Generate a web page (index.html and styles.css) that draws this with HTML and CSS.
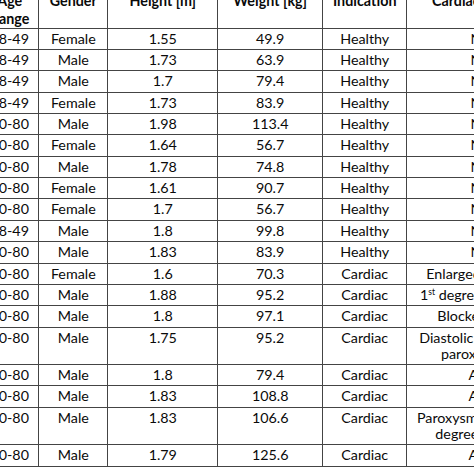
FILE: index.html
```html
<!DOCTYPE html>
<html>
<head>
<meta charset="utf-8">
<link rel="stylesheet" href="styles.css">
</head>
<body>
<div class="viewport">
<table class="data">
  <colgroup>
    <col class="c-age"><col class="c-gender"><col class="c-height"><col class="c-weight"><col class="c-ind"><col class="c-cond">
  </colgroup>
  <thead>
    <tr class="tall">
      <th>Age<br>Range</th><th>Gender</th><th>Height [m]</th><th>Weight [kg]</th><th>Indication</th><th>Cardiac condition</th>
    </tr>
  </thead>
  <tbody>
    <tr><td>18-49</td><td>Female</td><td>1.55</td><td>49.9</td><td>Healthy</td><td>None</td></tr>
    <tr><td>18-49</td><td>Male</td><td>1.73</td><td>63.9</td><td>Healthy</td><td>None</td></tr>
    <tr><td>18-49</td><td>Male</td><td>1.7</td><td>79.4</td><td>Healthy</td><td>None</td></tr>
    <tr><td>18-49</td><td>Female</td><td>1.73</td><td>83.9</td><td>Healthy</td><td>None</td></tr>
    <tr><td>50-80</td><td>Male</td><td>1.98</td><td>113.4</td><td>Healthy</td><td>None</td></tr>
    <tr><td>50-80</td><td>Female</td><td>1.64</td><td>56.7</td><td>Healthy</td><td>None</td></tr>
    <tr><td>50-80</td><td>Male</td><td>1.78</td><td>74.8</td><td>Healthy</td><td>None</td></tr>
    <tr><td>50-80</td><td>Female</td><td>1.61</td><td>90.7</td><td>Healthy</td><td>None</td></tr>
    <tr><td>50-80</td><td>Female</td><td>1.7</td><td>56.7</td><td>Healthy</td><td>None</td></tr>
    <tr><td>18-49</td><td>Male</td><td>1.8</td><td>99.8</td><td>Healthy</td><td>None</td></tr>
    <tr><td>50-80</td><td>Male</td><td>1.83</td><td>83.9</td><td>Healthy</td><td>None</td></tr>
    <tr><td>50-80</td><td>Female</td><td>1.6</td><td>70.3</td><td>Cardiac</td><td>Enlarged left atrium</td></tr>
    <tr><td>50-80</td><td>Male</td><td>1.88</td><td>95.2</td><td>Cardiac</td><td>1<sup>st</sup> degree heart block</td></tr>
    <tr><td>50-80</td><td>Male</td><td>1.8</td><td>97.1</td><td>Cardiac</td><td>Blocked arteries</td></tr>
    <tr class="tall"><td>50-80</td><td>Male</td><td>1.75</td><td>95.2</td><td>Cardiac</td><td>Diastolic heart failure,<br>paroxysmal AF.</td></tr>
    <tr><td>50-80</td><td>Male</td><td>1.8</td><td>79.4</td><td>Cardiac</td><td>Aortic</td></tr>
    <tr><td>50-80</td><td>Male</td><td>1.83</td><td>108.8</td><td>Cardiac</td><td>Aortic</td></tr>
    <tr class="tall"><td>50-80</td><td>Male</td><td>1.83</td><td>106.6</td><td>Cardiac</td><td>Paroxysmal AF and 1st<br>degree AV block,</td></tr>
    <tr><td>50-80</td><td>Male</td><td>1.79</td><td>125.6</td><td>Cardiac</td><td>Aortic</td></tr>
  </tbody>
</table>
</div>
</body>
</html>
```
FILE: styles.css
```css
html, body {
  margin: 0;
  padding: 0;
  background: #ffffff;
}
.viewport {
  width: 474px;
  height: 474px;
  overflow: hidden;
}
.data {
  border-collapse: collapse;
  table-layout: fixed;
  width: 588px;
  margin-left: -20px;
  margin-top: -10.4px;
  font-family: Lato, "Open Sans", sans-serif;
  font-size: 14.3px;
  color: #0a0a0a;
}
.c-age { width: 58.4px; }
.c-gender { width: 68.8px; }
.c-height { width: 110.2px; }
.c-weight { width: 104.6px; }
.c-ind { width: 84.5px; }
.c-cond { width: 161.5px; }
.data tr { height: 21.36px; }
.data tr.tall { height: 37.4px; }
.data th, .data td {
  border: 1px solid #444444;
  padding: 2px 2px 0 2px;
  line-height: 16px;
  text-align: center;
  vertical-align: top;
  white-space: nowrap;
  overflow: hidden;
  box-sizing: border-box;
}
.data th {
  font-weight: 700;
  padding-top: 1px;
  line-height: 18px;
}
.data sup {
  font-size: 8.5px;
  line-height: 0;
  vertical-align: 5px;
}
```
